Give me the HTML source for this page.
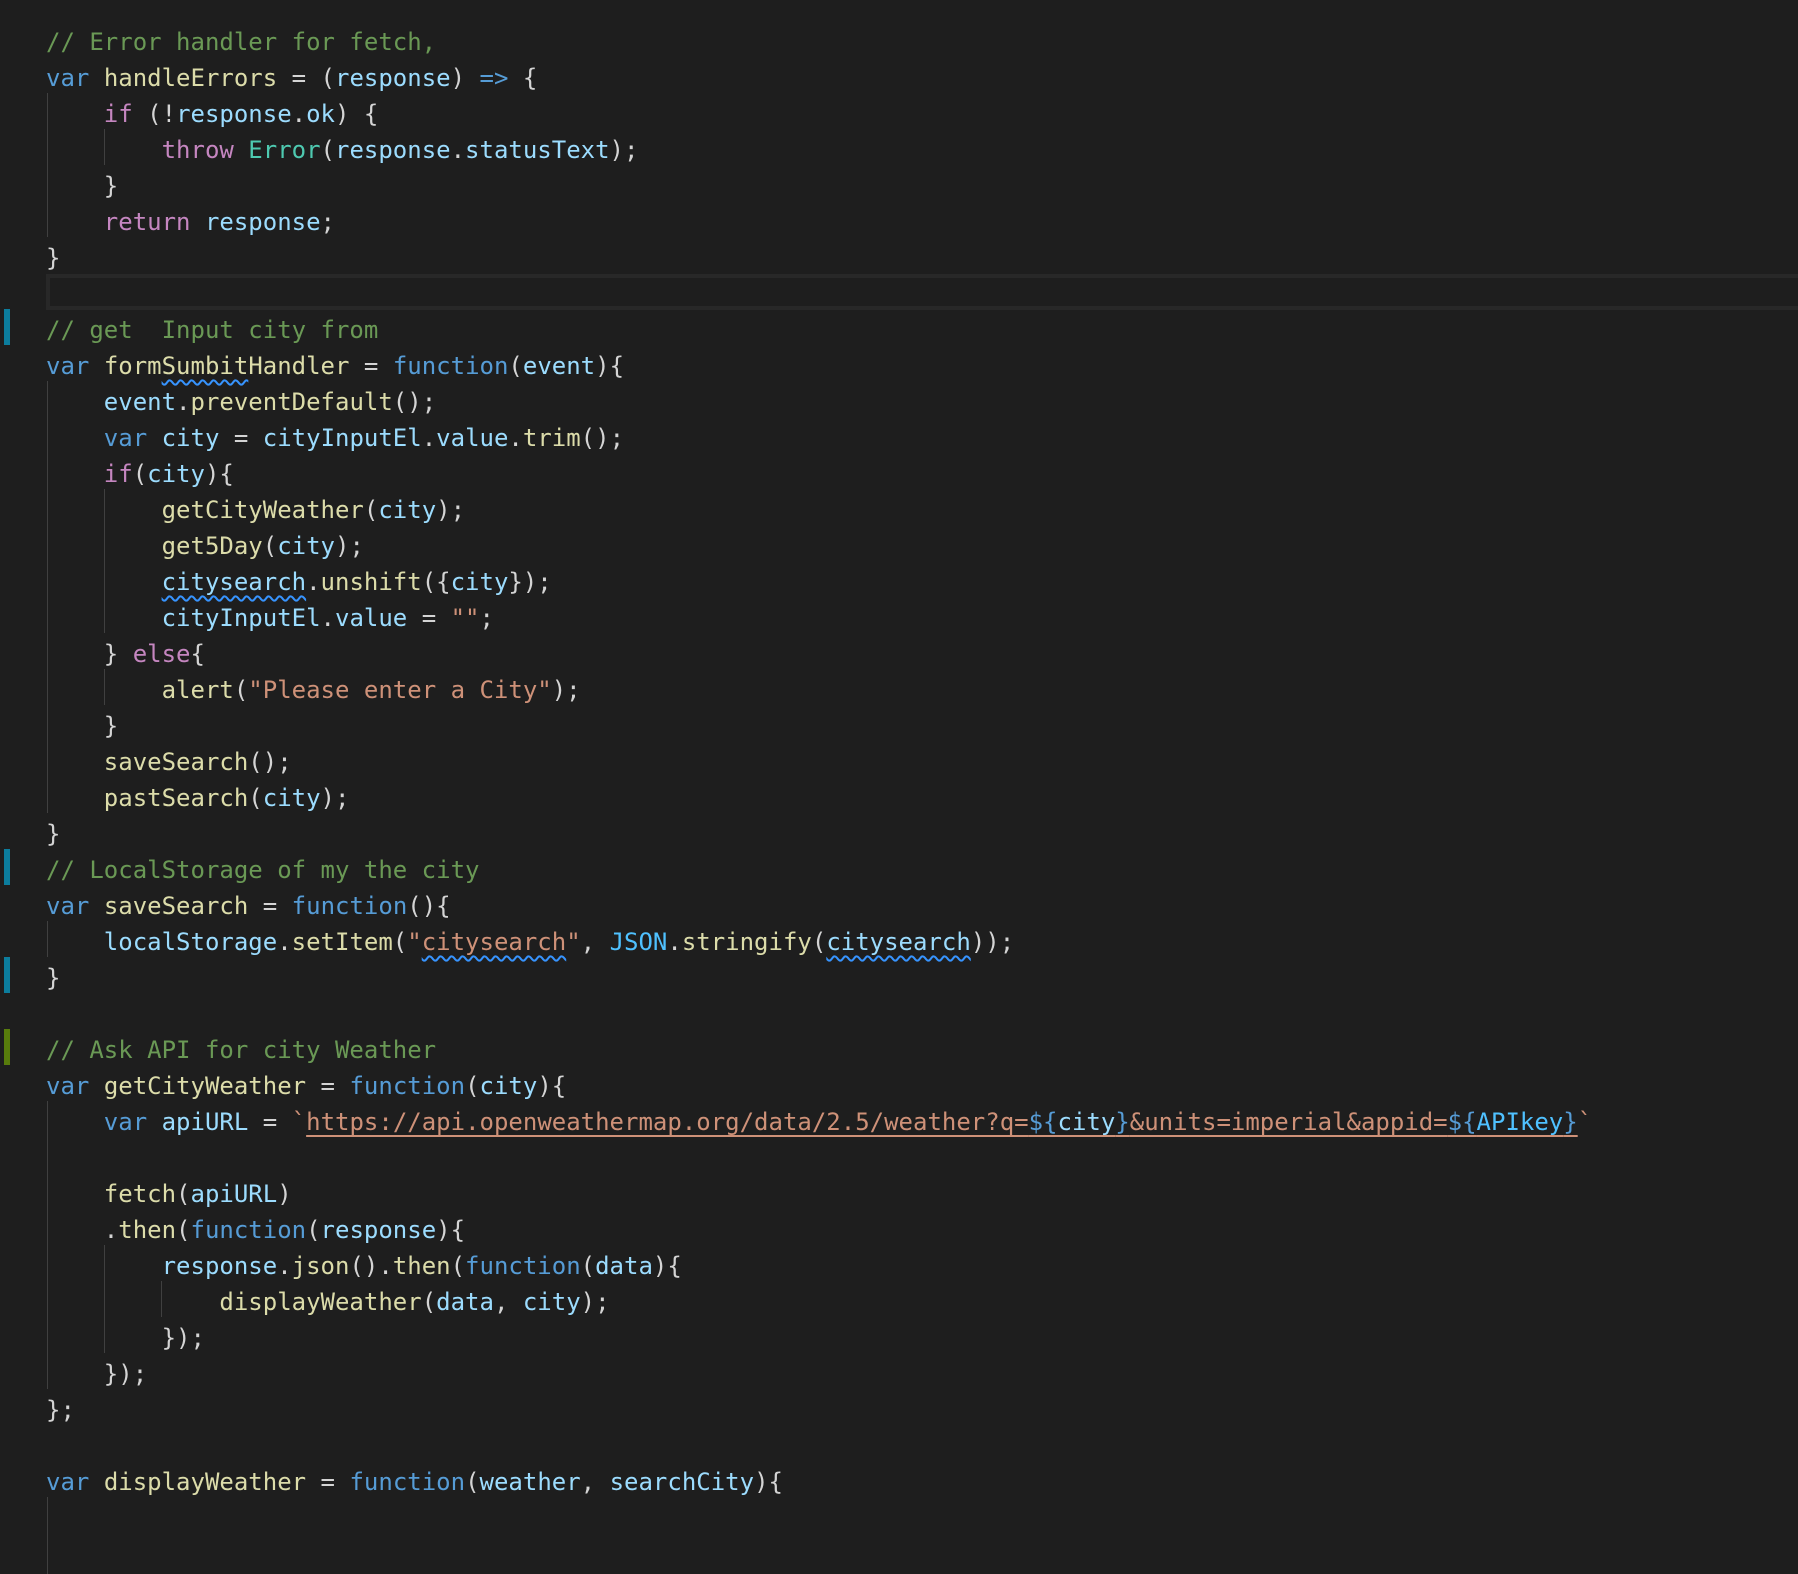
<!DOCTYPE html>
<html><head><meta charset="utf-8"><style>
html,body{margin:0;padding:0;background:#1e1e1e;width:1798px;height:1574px;overflow:hidden}
.ed{position:relative;width:1798px;height:1574px;font-family:"DejaVu Sans Mono","Liberation Mono",monospace;font-size:24px;color:#d4d4d4}
.l{position:absolute;left:46px;height:36px;line-height:36px;white-space:pre;margin-top:3px}
.c{color:#6a9955}.k{color:#569cd6}.p{color:#c586c0}.f{color:#dcdcaa}.v{color:#9cdcfe}.s{color:#ce9178}.t{color:#4ec9b0}.n{color:#4fc1ff}
.sq{text-decoration:underline wavy #3794ff;text-underline-offset:5px;text-decoration-thickness:1.5px}
.u{text-decoration:underline;text-underline-offset:5px}
.g{position:absolute;width:1px;background:#404040}
.m{position:absolute;left:4px;width:6px;height:36px}
.box{position:absolute;left:46px;top:274px;right:0;height:28px;border:4px solid #282828;border-right:none}
</style></head><body><div class="ed">
<div class="box"></div>
<div class="m" style="top:309px;background:#0c7d9d"></div>
<div class="m" style="top:849px;background:#0c7d9d"></div>
<div class="m" style="top:957px;background:#0c7d9d"></div>
<div class="m" style="top:1029px;background:#587c0c"></div>
<div class="g" style="left:47px;top:93px;height:144px"></div>
<div class="g" style="left:104px;top:129px;height:36px"></div>
<div class="g" style="left:47px;top:381px;height:432px"></div>
<div class="g" style="left:104px;top:489px;height:144px"></div>
<div class="g" style="left:104px;top:669px;height:36px"></div>
<div class="g" style="left:47px;top:921px;height:36px"></div>
<div class="g" style="left:47px;top:1101px;height:288px"></div>
<div class="g" style="left:104px;top:1245px;height:108px"></div>
<div class="g" style="left:161px;top:1281px;height:36px"></div>
<div class="g" style="left:47px;top:1497px;height:77px"></div>

<div class="l" style="top:21px"><span class="c">// Error handler for fetch,</span></div>
<div class="l" style="top:57px"><span class="k">var</span> <span class="f">handleErrors</span> = (<span class="v">response</span>) <span class="k">=&gt;</span> {</div>
<div class="l" style="top:93px">    <span class="p">if</span> (!<span class="v">response</span>.<span class="v">ok</span>) {</div>
<div class="l" style="top:129px">        <span class="p">throw</span> <span class="t">Error</span>(<span class="v">response</span>.<span class="v">statusText</span>);</div>
<div class="l" style="top:165px">    }</div>
<div class="l" style="top:201px">    <span class="p">return</span> <span class="v">response</span>;</div>
<div class="l" style="top:237px">}</div>
<div class="l" style="top:309px"><span class="c">// get  Input city from</span></div>
<div class="l" style="top:345px"><span class="k">var</span> <span class="f">form<span class="sq">Sumbit</span>Handler</span> = <span class="k">function</span>(<span class="v">event</span>){</div>
<div class="l" style="top:381px">    <span class="v">event</span>.<span class="f">preventDefault</span>();</div>
<div class="l" style="top:417px">    <span class="k">var</span> <span class="v">city</span> = <span class="v">cityInputEl</span>.<span class="v">value</span>.<span class="f">trim</span>();</div>
<div class="l" style="top:453px">    <span class="p">if</span>(<span class="v">city</span>){</div>
<div class="l" style="top:489px">        <span class="f">getCityWeather</span>(<span class="v">city</span>);</div>
<div class="l" style="top:525px">        <span class="f">get5Day</span>(<span class="v">city</span>);</div>
<div class="l" style="top:561px">        <span class="v sq">citysearch</span>.<span class="f">unshift</span>({<span class="v">city</span>});</div>
<div class="l" style="top:597px">        <span class="v">cityInputEl</span>.<span class="v">value</span> = <span class="s">""</span>;</div>
<div class="l" style="top:633px">    } <span class="p">else</span>{</div>
<div class="l" style="top:669px">        <span class="f">alert</span>(<span class="s">"Please enter a City"</span>);</div>
<div class="l" style="top:705px">    }</div>
<div class="l" style="top:741px">    <span class="f">saveSearch</span>();</div>
<div class="l" style="top:777px">    <span class="f">pastSearch</span>(<span class="v">city</span>);</div>
<div class="l" style="top:813px">}</div>
<div class="l" style="top:849px"><span class="c">// LocalStorage of my the city</span></div>
<div class="l" style="top:885px"><span class="k">var</span> <span class="f">saveSearch</span> = <span class="k">function</span>(){</div>
<div class="l" style="top:921px">    <span class="v">localStorage</span>.<span class="f">setItem</span>(<span class="s">"<span class="sq">citysearch</span>"</span>, <span class="n">JSON</span>.<span class="f">stringify</span>(<span class="v sq">citysearch</span>));</div>
<div class="l" style="top:957px">}</div>
<div class="l" style="top:1029px"><span class="c">// Ask API for city Weather</span></div>
<div class="l" style="top:1065px"><span class="k">var</span> <span class="f">getCityWeather</span> = <span class="k">function</span>(<span class="v">city</span>){</div>
<div class="l" style="top:1101px">    <span class="k">var</span> <span class="v">apiURL</span> = <span class="s">`<span class="u">https://api.openweathermap.org/data/2.5/weather?q=<span class="k">${</span><span class="v">city</span><span class="k">}</span>&amp;units=imperial&amp;appid=<span class="k">${</span><span class="n">APIkey</span><span class="k">}</span></span>`</span></div>
<div class="l" style="top:1173px">    <span class="f">fetch</span>(<span class="v">apiURL</span>)</div>
<div class="l" style="top:1209px">    .<span class="f">then</span>(<span class="k">function</span>(<span class="v">response</span>){</div>
<div class="l" style="top:1245px">        <span class="v">response</span>.<span class="f">json</span>().<span class="f">then</span>(<span class="k">function</span>(<span class="v">data</span>){</div>
<div class="l" style="top:1281px">            <span class="f">displayWeather</span>(<span class="v">data</span>, <span class="v">city</span>);</div>
<div class="l" style="top:1317px">        });</div>
<div class="l" style="top:1353px">    });</div>
<div class="l" style="top:1389px">};</div>
<div class="l" style="top:1461px"><span class="k">var</span> <span class="f">displayWeather</span> = <span class="k">function</span>(<span class="v">weather</span>, <span class="v">searchCity</span>){</div>
</div></body></html>
